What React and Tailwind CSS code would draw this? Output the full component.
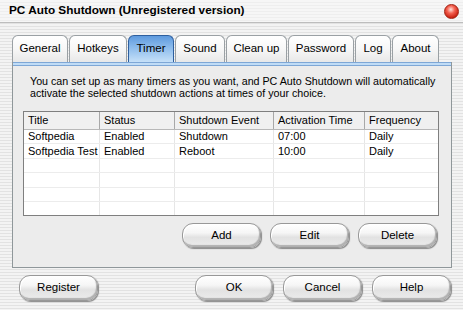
import React from "react";

const tabs = [
  { label: "General", cls: "w-[56px]" },
  { label: "Hotkeys", cls: "w-[58px] ml-[1px]" },
  { label: "Timer", cls: "w-[46px] ml-[1px]", active: true },
  { label: "Sound", cls: "w-[50px] ml-[1px]" },
  { label: "Clean up", cls: "w-[61px] ml-[1px]" },
  { label: "Password", cls: "w-[66px] ml-[1px]" },
  { label: "Log", cls: "w-[36px] ml-[1px]" },
  { label: "About", cls: "w-[47px] ml-[1px]" },
];

const cols = [
  { label: "Title", cls: "w-[76px]" },
  { label: "Status", cls: "w-[75px]" },
  { label: "Shutdown Event", cls: "w-[99px]" },
  { label: "Activation Time", cls: "w-[91px]" },
  { label: "Frequency", cls: "flex-1" },
];

const rows = [
  ["Softpedia", "Enabled", "Shutdown", "07:00", "Daily"],
  ["Softpedia Test", "Enabled", "Reboot", "10:00", "Daily"],
  ["", "", "", "", ""],
  ["", "", "", "", ""],
  ["", "", "", "", ""],
  ["", "", "", "", ""],
];

function Btn({ children, cls }) {
  return (
    <div
      className={
        "flex items-center justify-center rounded-[11px] border border-[#989898] bg-[linear-gradient(to_bottom,#ffffff_0%,#f6f6f6_38%,#e2e2e2_58%,#ececec_100%)] shadow-[inset_-1px_-2px_1px_#b0b0b0,inset_1px_1px_0_#ffffff,1px_1px_1px_#8a8a8a] text-[11.5px] text-black " +
        cls
      }
    >
      {children}
    </div>
  );
}

export default function App() {
  return (
    <div className="w-[463px] h-[310px] overflow-hidden font-['Liberation_Sans',Arial,sans-serif] text-[11px] text-black bg-[repeating-linear-gradient(to_bottom,#f3f3f3_0px,#f3f3f3_2px,#e2e2e2_2px,#e2e2e2_3px)]">
      {/* Title bar */}
      <div className="h-[23px] flex items-center justify-between pl-[9px] pr-[4px] border-b border-[#bdbdbd] bg-[repeating-linear-gradient(to_bottom,#f6f6f6_0px,#f6f6f6_2px,#eeeeee_2px,#eeeeee_3px)]">
        <span className="font-bold text-[11.8px] leading-none whitespace-nowrap">PC Auto Shutdown (Unregistered version)</span>
        <div className="w-[15px] h-[15px] rounded-full border border-[#a02010] bg-[radial-gradient(circle_at_45%_35%,#ffe0d8_0%,#f46050_35%,#c82010_75%,#a01000_100%)]" />
      </div>

      <div className="px-[11px] pt-[12px]">
        {/* Tabs */}
        <div className="flex items-end h-[27px] pl-[1px]">
          {tabs.map((t) => (
            <div
              key={t.label}
              className={
                "h-[27px] flex items-center justify-center rounded-t-[6px] border border-b-0 text-[11.5px] whitespace-nowrap " +
                (t.active
                  ? "border-[#2e5f9e] bg-[linear-gradient(to_bottom,#5e9ade_0%,#8dbcec_45%,#c6e0f8_100%)] "
                  : "border-[#9aa0a4] bg-[linear-gradient(to_bottom,#ffffff_0%,#f7f7f7_50%,#e8e8e8_100%)] ") +
                t.cls
              }
            >
              {t.label}
            </div>
          ))}
        </div>

        {/* Panel */}
        <div className="ml-[1px] w-[440px] h-[206px] border border-t-0 border-[#8f979a] bg-[#ececec] flex flex-col">
          <div className="h-[4px] border-y border-[#7ea7d6] bg-[#c0dcf6]" />
          <div className="pl-[17px] pt-[9px] leading-[12px] text-[10.7px] whitespace-nowrap">
            <p>You can set up as many timers as you want, and PC Auto Shutdown will automatically</p>
            <p>activate the selected shutdown actions at times of your choice.</p>
          </div>

          {/* Table */}
          <div className="ml-[10px] mt-[12px] w-[416px] h-[105px] border border-[#7f7f7f] bg-white flex flex-col overflow-hidden">
            <div className="h-[18px] shrink-0 flex bg-[#f0f0f0] border-b border-[#b8b8b8]">
              {cols.map((c, i) => (
                <div
                  key={c.label}
                  className={
                    "h-full flex items-center pl-[4px] text-[11px] whitespace-nowrap " +
                    (i < cols.length - 1 ? "border-r border-[#a8a8a8] " : "") +
                    c.cls
                  }
                >
                  {c.label}
                </div>
              ))}
            </div>
            {rows.map((r, ri) => (
              <div key={ri} className="h-[14.4px] shrink-0 flex border-b border-[#ececec]">
                {r.map((v, ci) => (
                  <div
                    key={ci}
                    className={
                      "h-full flex items-center pl-[4px] text-[11px] leading-none whitespace-nowrap " +
                      (ci < r.length - 1 ? "border-r border-[#e6e6e6] " : "") +
                      cols[ci].cls
                    }
                  >
                    {v}
                  </div>
                ))}
              </div>
            ))}
          </div>

          {/* Panel buttons */}
          <div className="flex justify-end gap-[9px] pr-[14px] mt-[7px]">
            <Btn cls="w-[79px] h-[25px]">Add</Btn>
            <Btn cls="w-[79px] h-[25px]">Edit</Btn>
            <Btn cls="w-[79px] h-[25px]">Delete</Btn>
          </div>
        </div>
      </div>

      {/* Bottom buttons */}
      <div className="flex mt-[7px] pl-[19px]">
        <Btn cls="w-[79px] h-[26px]">Register</Btn>
        <div className="flex gap-[10px] ml-[97px]">
          <Btn cls="w-[78px] h-[26px]">OK</Btn>
          <Btn cls="w-[79px] h-[26px]">Cancel</Btn>
          <Btn cls="w-[79px] h-[26px]">Help</Btn>
        </div>
      </div>
    </div>
  );
}
